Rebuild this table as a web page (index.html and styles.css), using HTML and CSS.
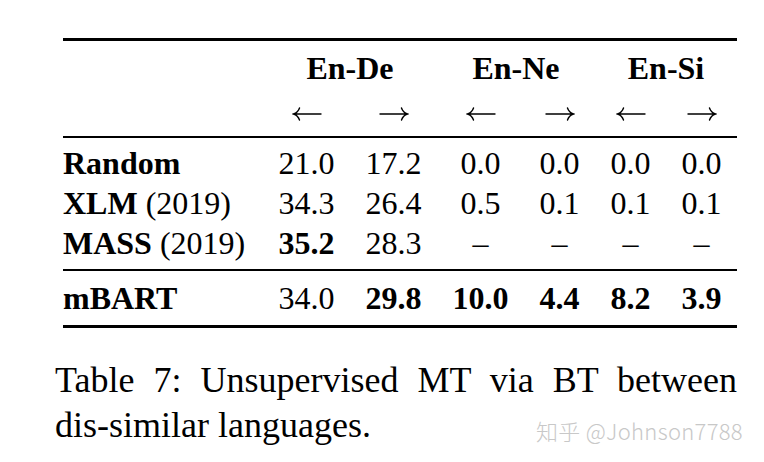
FILE: index.html
```html
<!DOCTYPE html>
<html lang="en">
<head>
  <meta charset="UTF-8">
  <title>Table 7</title>
  <link rel="stylesheet" href="styles.css">
</head>
<body>
  <div class="page">
    <table class="results">
      <thead>
        <tr class="head-langs">
          <th class="label"></th>
          <th colspan="2">En-De</th>
          <th colspan="2">En-Ne</th>
          <th colspan="2">En-Si</th>
        </tr>
        <tr class="head-dirs">
          <th class="label"></th>
          <th><svg class="arrow" viewBox="0 0 30 14"><path d="M1.5 7 H29 M7.5 1 Q6 5.5 1.5 7 Q6 8.5 7.5 13"/></svg></th>
          <th><svg class="arrow" viewBox="0 0 30 14"><path d="M1 7 H28.5 M22.5 1 Q24 5.5 28.5 7 Q24 8.5 22.5 13"/></svg></th>
          <th><svg class="arrow" viewBox="0 0 30 14"><path d="M1.5 7 H29 M7.5 1 Q6 5.5 1.5 7 Q6 8.5 7.5 13"/></svg></th>
          <th><svg class="arrow" viewBox="0 0 30 14"><path d="M1 7 H28.5 M22.5 1 Q24 5.5 28.5 7 Q24 8.5 22.5 13"/></svg></th>
          <th><svg class="arrow" viewBox="0 0 30 14"><path d="M1.5 7 H29 M7.5 1 Q6 5.5 1.5 7 Q6 8.5 7.5 13"/></svg></th>
          <th><svg class="arrow" viewBox="0 0 30 14"><path d="M1 7 H28.5 M22.5 1 Q24 5.5 28.5 7 Q24 8.5 22.5 13"/></svg></th>
        </tr>
      </thead>
      <tbody class="baselines">
        <tr class="first">
          <td class="label"><b>Random</b></td>
          <td>21.0</td><td>17.2</td><td>0.0</td><td>0.0</td><td>0.0</td><td>0.0</td>
        </tr>
        <tr>
          <td class="label"><b>XLM</b> (2019)</td>
          <td>34.3</td><td>26.4</td><td>0.5</td><td>0.1</td><td>0.1</td><td>0.1</td>
        </tr>
        <tr class="last">
          <td class="label"><b>MASS</b> (2019)</td>
          <td><b>35.2</b></td><td>28.3</td><td>&ndash;</td><td>&ndash;</td><td>&ndash;</td><td>&ndash;</td>
        </tr>
      </tbody>
      <tbody class="ours">
        <tr>
          <td class="label"><b>mBART</b></td>
          <td>34.0</td><td><b>29.8</b></td><td><b>10.0</b></td><td><b>4.4</b></td><td><b>8.2</b></td><td><b>3.9</b></td>
        </tr>
      </tbody>
    </table>

    <p class="caption">Table 7: Unsupervised MT via BT between dis-similar languages.</p>

    <span class="watermark">知乎 @Johnson7788</span>
  </div>
</body>
</html>
```

FILE: styles.css
```css
body {
  margin: 0;
  background: #ffffff;
  color: #000000;
  font-family: "Liberation Serif", "Times New Roman", serif;
}

.page {
  position: relative;
  width: 764px;
  height: 462px;
  padding: 38px 0 0 55px;
  box-sizing: border-box;
}

/* 표 */
.results {
  margin-left: 8px;
  width: 674px;
  border-collapse: collapse;
  border-top: 3px solid #000;
  border-bottom: 3px solid #000;
  font-size: 32px;
  line-height: 40px;
}

.results th,
.results td {
  padding: 0 15.5px;
  text-align: center;
  white-space: nowrap;
}

.results .label {
  padding-left: 0;
  text-align: left;
  width: 186px;
}

.results th {
  font-weight: bold;
}

.head-langs th {
  padding-top: 7px;
}

.head-dirs th {
  font-weight: normal;
  padding-top: 2px;
  padding-bottom: 6px;
  border-bottom: 2px solid #000;
}

.arrow {
  width: 30px;
  height: 14px;
  vertical-align: middle;
  fill: none;
  stroke: #000;
  stroke-width: 1.4;
  stroke-linecap: round;
}

.baselines .first td {
  padding-top: 5px;
}

.baselines .last td {
  padding-bottom: 6px;
  border-bottom: 2px solid #000;
}

.ours td {
  padding-top: 7px;
  padding-bottom: 7px;
}

/* 캡션 */
.caption {
  width: 682px;
  margin: 30px 0 0 0;
  font-size: 36px;
  line-height: 45px;
  text-align: justify;
}

.watermark {
  position: absolute;
  left: 536px;
  top: 414px;
  font-family: "Noto Sans CJK SC", "Noto Sans", sans-serif;
  font-size: 22px;
  font-weight: 300;
  color: #c8c8c8;
  letter-spacing: 0.3px;
}
```
